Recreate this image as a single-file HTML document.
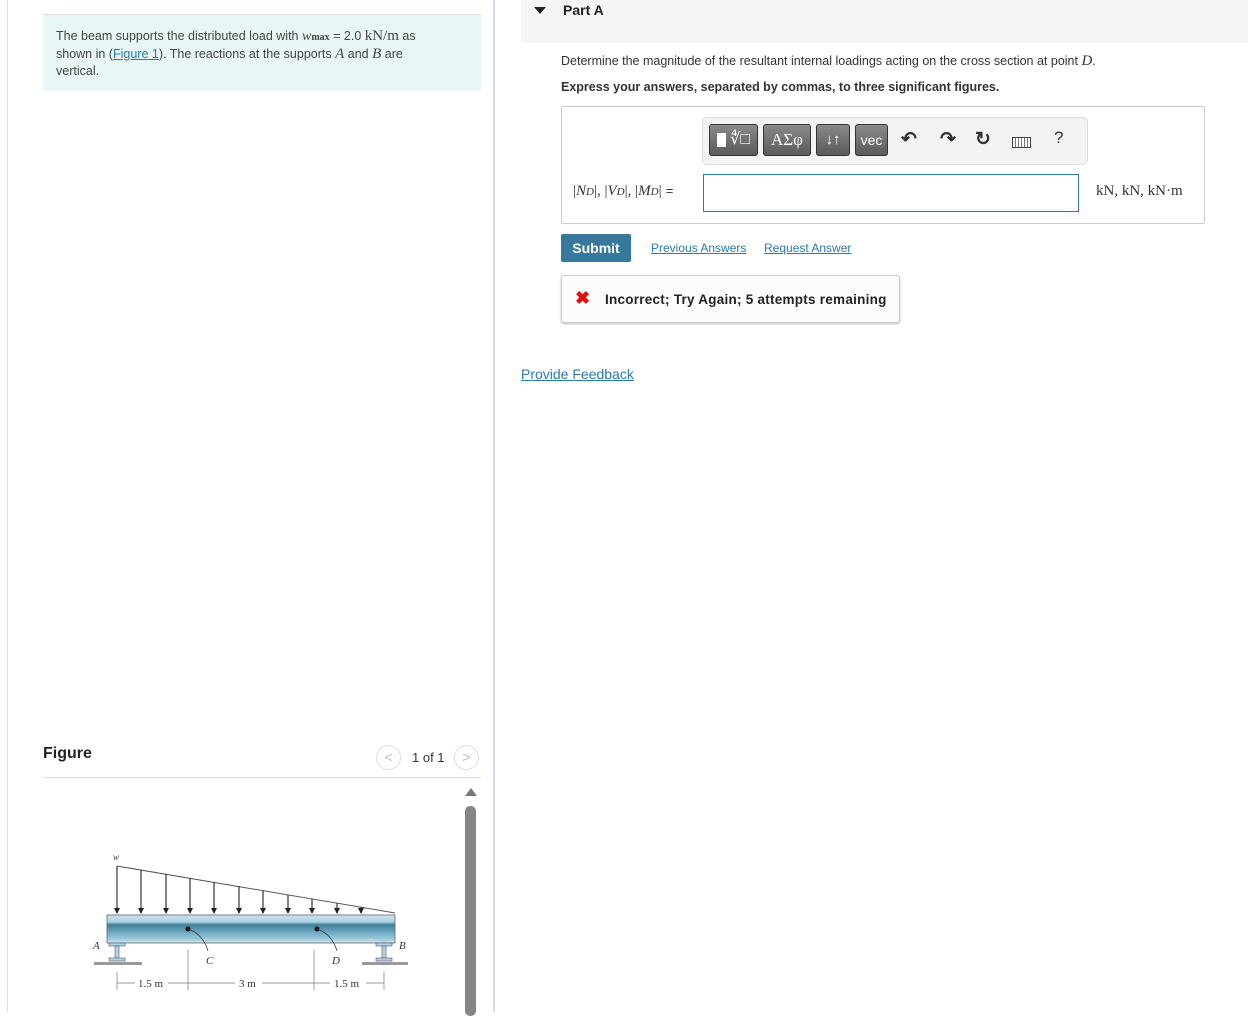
<!DOCTYPE html>
<html><head><meta charset="utf-8"><style>
*{margin:0;padding:0;box-sizing:border-box}
body{width:1248px;height:1012px;position:relative;background:#fff;font-family:"Liberation Sans",sans-serif;color:#333;overflow:hidden}
.abs{position:absolute}
.m{font-family:"Liberation Serif",serif;font-style:italic}
.r{font-family:"Liberation Serif",serif}
a{color:#2a7ab0}
.btn{position:absolute;top:124px;height:32px;background:linear-gradient(#8a8a8a,#5a5a5a);border:1px solid #333;border-radius:3px;color:#fff;font-size:15px;text-align:center;line-height:30px}
.ic{position:absolute;top:128px;font-size:19px;color:#333;font-weight:bold}
</style></head><body>
<div class="abs" style="left:7px;top:0;width:1px;height:1012px;background:#e0e0e0"></div>
<div class="abs" style="left:493px;top:0;width:2px;height:1012px;background:#d3dde8"></div>
<div class="abs" style="left:43px;top:14px;width:438px;height:77px;background:#e9f6f6;border-top:1px solid #dde"></div>
<div class="abs" style="left:56px;top:28px;width:392px;font-size:12.5px;line-height:17px;color:#444">The beam supports the distributed load with <span class="m" style="font-size:14px">w</span><span class="r" style="font-size:10px;font-weight:bold">max</span> = 2.0 <span class="r" style="font-size:15px">kN/m</span> as shown in (<a href="#">Figure 1</a>). The reactions at the supports <span class="m" style="font-size:15px">A</span> and <span class="m" style="font-size:15px">B</span> are vertical.</div>

<div class="abs" style="left:43px;top:745px;font-size:16px;color:#222;font-weight:bold">Figure</div>
<div class="abs" style="left:376px;top:745px;width:25px;height:25px;border:1px solid #ddd;border-radius:50%;color:#bbb;text-align:center;line-height:22px;font-size:14px">&lt;</div>
<div class="abs" style="left:412px;top:750px;font-size:13px;color:#333">1 of 1</div>
<div class="abs" style="left:454px;top:745px;width:25px;height:25px;border:1px solid #ddd;border-radius:50%;color:#bbb;text-align:center;line-height:22px;font-size:14px">&gt;</div>
<div class="abs" style="left:43px;top:777px;width:438px;height:1px;background:#ddd"></div>
<div class="abs" style="left:465px;top:788px;width:0;height:0;border-left:6px solid transparent;border-right:6px solid transparent;border-bottom:8px solid #777"></div>
<div class="abs" style="left:465px;top:806px;width:11px;height:210px;background:#858585;border-radius:5px"></div>

<svg class="abs" style="left:0;top:0" width="494" height="1012">
<text x="113" y="860" font-family="Liberation Serif" font-style="italic" font-size="9" fill="#444">w</text>
<line x1="117" y1="866" x2="395" y2="913" stroke="#555" stroke-width="1"/>
<g stroke="#333" stroke-width="1.2">
<line x1="117" y1="866" x2="117" y2="913"/><line x1="141" y1="870" x2="141" y2="913"/><line x1="166" y1="874" x2="166" y2="913"/><line x1="190" y1="878" x2="190" y2="913"/><line x1="214" y1="882" x2="214" y2="913"/><line x1="239" y1="886" x2="239" y2="913"/><line x1="263" y1="891" x2="263" y2="913"/><line x1="288" y1="895" x2="288" y2="913"/><line x1="312" y1="899" x2="312" y2="913"/><line x1="337" y1="903" x2="337" y2="913"/><line x1="361" y1="907" x2="361" y2="913"/></g>
<g fill="#222"><path d="M114 908h6l-3 6z"/><path d="M138 908h6l-3 6z"/><path d="M163 908h6l-3 6z"/><path d="M187 908h6l-3 6z"/><path d="M211 908h6l-3 6z"/><path d="M236 908h6l-3 6z"/><path d="M260 908h6l-3 6z"/><path d="M285 908h6l-3 6z"/><path d="M309 908h6l-3 6z"/><path d="M334 908h6l-3 6z"/><path d="M358 908h6l-3 6z"/></g>
<defs><linearGradient id="g" x1="0" y1="0" x2="0" y2="1"><stop offset="0" stop-color="#cde4ee"/><stop offset="0.25" stop-color="#a9cfe0"/><stop offset="0.35" stop-color="#3f7f9c"/><stop offset="0.6" stop-color="#6aa5bf"/><stop offset="0.85" stop-color="#9cc8da"/><stop offset="1" stop-color="#cfe6ef"/></linearGradient></defs>
<rect x="107" y="915" width="288" height="28" fill="url(#g)" stroke="#666" stroke-width="0.8"/>
<circle cx="188" cy="929" r="2.5" fill="#111"/><circle cx="317" cy="929" r="2.5" fill="#111"/>
<path d="M188 929q15 5 20 22" stroke="#333" fill="none" stroke-width="0.7"/><path d="M317 929q15 5 20 22" stroke="#333" fill="none" stroke-width="0.7"/>
<g fill="#aed3e2" stroke="#557" stroke-width="0.6"><rect x="109" y="943" width="16" height="3"/><rect x="115" y="946" width="4" height="12"/><rect x="109" y="958" width="16" height="3"/><rect x="376" y="943" width="16" height="3"/><rect x="382" y="946" width="4" height="12"/><rect x="376" y="958" width="16" height="3"/></g>
<rect x="94" y="962" width="48" height="3" fill="#999"/><rect x="362" y="962" width="46" height="3" fill="#999"/>
<g font-family="Liberation Serif" font-style="italic" font-size="11" fill="#333"><text x="93" y="949">A</text><text x="399" y="949">B</text><text x="206" y="964">C</text><text x="332" y="964">D</text></g>
<g stroke="#777" stroke-width="0.7"><line x1="117" y1="972" x2="117" y2="990"/><line x1="188" y1="950" x2="188" y2="990"/><line x1="314" y1="950" x2="314" y2="990"/><line x1="384" y1="972" x2="384" y2="990"/><line x1="117" y1="983" x2="135" y2="983"/><line x1="168" y1="983" x2="235" y2="983"/><line x1="262" y1="983" x2="330" y2="983"/><line x1="366" y1="983" x2="384" y2="983"/></g>
<g font-family="Liberation Serif" font-size="11" fill="#333"><text x="138" y="987">1.5 m</text><text x="239" y="987">3 m</text><text x="334" y="987">1.5 m</text></g>
</svg>

<div class="abs" style="left:521px;top:0;width:727px;height:43px;background:#f5f5f5"></div>
<div class="abs" style="left:534px;top:7px;width:0;height:0;border-left:6px solid transparent;border-right:6px solid transparent;border-top:7px solid #222"></div>
<div class="abs" style="left:563px;top:2px;font-size:14px;color:#222;font-weight:bold">Part A</div>
<div class="abs" style="left:561px;top:53px;font-size:12.5px;color:#333">Determine the magnitude of the resultant internal loadings acting on the cross section at point <span class="m" style="font-size:15px">D</span>.</div>
<div class="abs" style="left:561px;top:80px;font-size:12.5px;font-weight:bold;color:#333">Express your answers, separated by commas, to three significant figures.</div>

<div class="abs" style="left:561px;top:106px;width:644px;height:118px;border:1px solid #ccc;border-radius:2px"></div>
<div class="abs" style="left:702px;top:117px;width:386px;height:48px;background:#f3f3f3;border:1px solid #ddd;border-radius:5px"></div>
<div class="btn" style="left:709px;width:49px"><span style="display:inline-block;width:9px;height:14px;background:#fff;vertical-align:middle"></span> <span style="font-size:16px">∜□</span></div>
<div class="btn" style="left:763px;width:48px;font-family:'Liberation Serif',serif;font-size:17px">ΑΣφ</div>
<div class="btn" style="left:816px;width:34px">↓↑</div>
<div class="btn" style="left:855px;width:33px;font-size:14px">vec</div>
<div class="ic" style="left:901px">↶</div>
<div class="ic" style="left:940px">↷</div>
<div class="ic" style="left:975px">↻</div>
<div class="abs" style="left:1012px;top:137px;width:19px;height:11px;border:1.5px solid #444;background:repeating-linear-gradient(90deg,#fff 0 2px,#777 2px 3px)"></div>
<div class="ic" style="left:1054px;font-size:17px;font-weight:normal">?</div>
<div class="abs" style="left:573px;top:182px;font-size:15px;color:#333"><span class="r">|</span><span class="m">N</span><span class="m" style="font-size:11px">D</span><span class="r">|, |</span><span class="m">V</span><span class="m" style="font-size:11px">D</span><span class="r">|, |</span><span class="m">M</span><span class="m" style="font-size:11px">D</span><span class="r">|</span> <span style="font-size:13px">=</span></div>
<div class="abs" style="left:703px;top:174px;width:376px;height:38px;border:1px solid #2f7aa5"></div>
<div class="abs r" style="left:1096px;top:183px;font-size:15px;color:#333">kN, kN, kN·m</div>

<div class="abs" style="left:561px;top:234px;width:70px;height:28px;background:#37799c;border-radius:2px;color:#fff;font-size:14px;text-align:center;line-height:28px;font-weight:bold">Submit</div>
<div class="abs" style="left:651px;top:241px;font-size:12px"><a href="#">Previous Answers</a></div>
<div class="abs" style="left:764px;top:241px;font-size:12px"><a href="#">Request Answer</a></div>
<div class="abs" style="left:561px;top:275px;width:339px;height:48px;border:1px solid #ccc;border-radius:3px;box-shadow:0 1px 2px #bbb;background:#fcfcfc"></div>
<div class="abs" style="left:575px;top:288px;font-size:18px;font-weight:bold;color:#d11">✖</div>
<div class="abs" style="left:605px;top:292px;font-size:13.5px;color:#222;font-weight:bold;letter-spacing:0.25px">Incorrect; Try Again; 5 attempts remaining</div>
<div class="abs" style="left:521px;top:366px;font-size:14px"><a href="#">Provide Feedback</a></div>
</body></html>
